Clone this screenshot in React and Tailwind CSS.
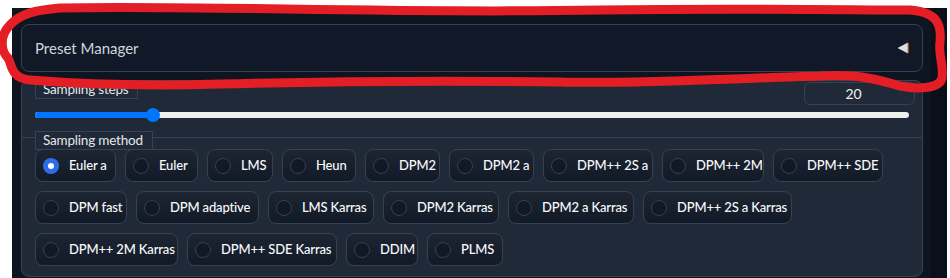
import { useState } from "react";

// Sampler list, widths taken from the screenshot so wrapping matches
const samplers = [
  { name: "Euler a", w: "w-[81px]" },
  { name: "Euler", w: "w-[73px]" },
  { name: "LMS", w: "w-[66px]" },
  { name: "Heun", w: "w-[74px]" },
  { name: "DPM2", w: "w-[75px]" },
  { name: "DPM2 a", w: "w-[85px]" },
  { name: "DPM++ 2S a", w: "w-[110px]" },
  { name: "DPM++ 2M", w: "w-[102px]" },
  { name: "DPM++ SDE", w: "w-[110px]" },
  { name: "DPM fast", w: "w-[92px]" },
  { name: "DPM adaptive", w: "w-[123px]" },
  { name: "LMS Karras", w: "w-[106px]" },
  { name: "DPM2 Karras", w: "w-[116px]" },
  { name: "DPM2 a Karras", w: "w-[126px]" },
  { name: "DPM++ 2S a Karras", w: "w-[149px]" },
  { name: "DPM++ 2M Karras", w: "w-[143px]" },
  { name: "DPM++ SDE Karras", w: "w-[150px]" },
  { name: "DDIM", w: "w-[72px]" },
  { name: "PLMS", w: "w-[76px]" },
];

const RadioItem = ({ name, w, checked, onSelect }) => (
  <button
    type="button"
    onClick={onSelect}
    className={`${w} shrink-0 h-[33px] flex items-center gap-[10px] pl-[7px] border border-[#374151] rounded-lg bg-gradient-to-b from-[#1d2533] to-[#121a28] text-[13px] font-medium tracking-[-0.15px] text-[#f9fafb] whitespace-nowrap overflow-hidden`}
  >
    {checked ? (
      <span className="w-[16px] h-[16px] rounded-full bg-[#2d6ee8] flex items-center justify-center shrink-0">
        <span className="w-[6px] h-[6px] rounded-full bg-white" />
      </span>
    ) : (
      <span className="w-[16px] h-[16px] rounded-full bg-[#111827] border border-[#374151] shrink-0" />
    )}
    <span>{name}</span>
  </button>
);

const App = () => {
  const [sampler, setSampler] = useState("Euler a");
  const steps = 20;

  return (
    <div className="relative w-[950px] h-[278px] bg-white overflow-hidden font-[family-name:Lato,'Noto_Sans',sans-serif]">
      <div className="ml-[12px] mt-[8px] w-[935px] h-[270px] bg-[#0b0f19] flex">
        <div className="w-[919px] bg-[#0f1421] pl-[9px] pr-[8px] pt-[16px]">
          {/* Preset Manager accordion */}
          <div className="h-[48px] flex items-center justify-between pl-[13px] pr-[13px] border border-[#374151] rounded-lg bg-[#111827]">
            <span className="text-[15px] text-[#d1d5db]">Preset Manager</span>
            <svg width="12" height="12" viewBox="0 0 12 12">
              <polygon points="11,0.5 11,11.5 0.5,6" fill="#dbe0e8" />
              <rect x="10.5" y="1" width="1.2" height="10" fill="#c2702a" />
            </svg>
          </div>

          {/* settings panel */}
          <div className="mt-[8px] h-[197px] border border-[#374151] rounded-lg bg-[#1f2937]">
            {/* Sampling steps */}
            <div className="h-[56px]">
              <div className="flex justify-between items-start pl-[13px] pr-[7px]">
                <div className="-mt-[1px] h-[19px] w-[103px] border border-[#374151] flex items-center px-[7px] text-[13.5px] tracking-[-0.2px] whitespace-nowrap text-[#e5e7eb] bg-[#1f2937]">
                  Sampling steps
                </div>
                <div className="mt-[1px] h-[23px] w-[111px] border border-[#374151] rounded-md flex items-center justify-center pr-[12px] text-[14px] text-[#f3f4f6]">
                  {steps}
                </div>
              </div>
              <div className="mt-[3px] mx-[13px] h-[14px] relative flex items-center">
                <div className="h-[6px] w-full rounded-full bg-[#efefef]" />
                <div className="absolute left-0 h-[6px] w-[118px] rounded-full bg-[#0075ff]" />
                <div className="absolute left-[111px] w-[14px] h-[14px] rounded-full bg-[#0075ff]" />
              </div>
            </div>

            {/* Sampling method */}
            <div className="border-t border-[#374151] pl-[13px] pr-[8px]">
              <div className="-mt-[7px] h-[19px] w-[118px] border border-[#374151] flex items-center px-[7px] text-[13.5px] tracking-[-0.2px] whitespace-nowrap text-[#e5e7eb] bg-[#1f2937]">
                Sampling method
              </div>
              <div className="-mt-[1px] flex flex-wrap gap-[9px]">
                {samplers.map((s) => (
                  <RadioItem
                    key={s.name}
                    name={s.name}
                    w={s.w}
                    checked={sampler === s.name}
                    onSelect={() => setSampler(s.name)}
                  />
                ))}
              </div>
            </div>
          </div>
        </div>
      </div>

      {/* red marker annotation */}
      <svg
        className="absolute inset-0 pointer-events-none"
        width="950"
        height="278"
        viewBox="0 0 950 278"
      >
        <path
          d="M 60 8 C 200 5, 400 14, 600 10 C 750 8, 850 10, 910 10 C 935 12, 942 22, 940 42 C 938 55, 944 65, 942 78 C 940 88, 920 90, 900 86 C 880 80, 860 74, 820 76 C 740 78, 640 84, 560 82 C 420 80, 300 82, 220 84 C 150 86, 80 84, 30 80 C 10 78, 12 64, 8 58 C 0 50, 0 35, 10 25 C 20 14, 35 10, 60 8 Z"
          fill="none"
          stroke="#e31e24"
          strokeWidth="9"
          strokeLinejoin="round"
          strokeLinecap="round"
        />
      </svg>
    </div>
  );
};

export default App;
